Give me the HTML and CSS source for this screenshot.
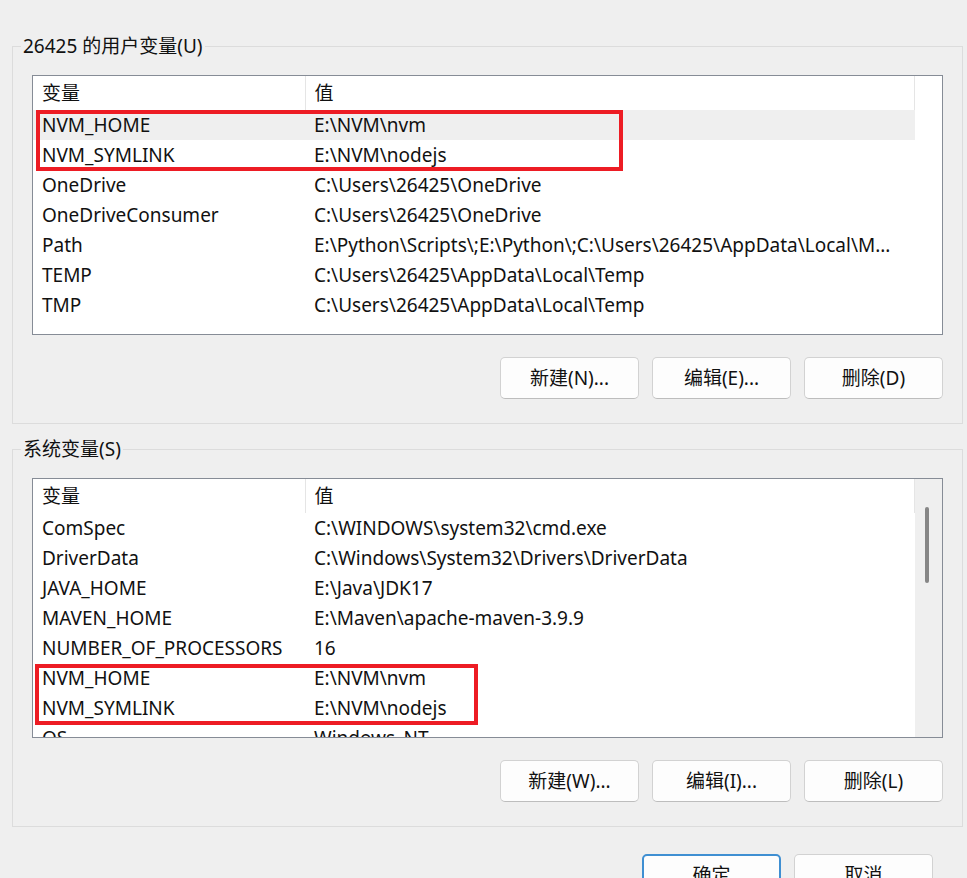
FILE: index.html
```html
<!DOCTYPE html>
<html lang="zh-CN">
  <head>
    <meta charset="UTF-8" />
    <meta name="viewport" content="width=device-width, initial-scale=1.0" />
    <title>环境变量</title>
    <link rel="stylesheet" href="styles.css">
  </head>
  <body>
    <form class="dialog">
      <fieldset class="group">
        <legend>26425 的用户变量(U)</legend>
        <div class="list">
          <table>
            <thead>
              <tr>
                <th class="name">变量</th>
                <th>值</th>
              </tr>
            </thead>
            <tbody>
              <tr class="selected"><td>NVM_HOME</td><td>E:\NVM\nvm</td></tr>
              <tr><td>NVM_SYMLINK</td><td>E:\NVM\nodejs</td></tr>
              <tr><td>OneDrive</td><td>C:\Users\26425\OneDrive</td></tr>
              <tr><td>OneDriveConsumer</td><td>C:\Users\26425\OneDrive</td></tr>
              <tr><td>Path</td><td>E:\Python\Scripts\;E:\Python\;C:\Users\26425\AppData\Local\M...</td></tr>
              <tr><td>TEMP</td><td>C:\Users\26425\AppData\Local\Temp</td></tr>
              <tr><td>TMP</td><td>C:\Users\26425\AppData\Local\Temp</td></tr>
            </tbody>
          </table>
          <div class="gutter"></div>
          <div class="mark mark-user"></div>
        </div>
        <div class="buttons">
          <button type="button">新建(N)...</button>
          <button type="button">编辑(E)...</button>
          <button type="button">删除(D)</button>
        </div>
      </fieldset>

      <fieldset class="group">
        <legend>系统变量(S)</legend>
        <div class="list">
          <table>
            <thead>
              <tr>
                <th class="name">变量</th>
                <th>值</th>
              </tr>
            </thead>
            <tbody>
              <tr><td>ComSpec</td><td>C:\WINDOWS\system32\cmd.exe</td></tr>
              <tr><td>DriverData</td><td>C:\Windows\System32\Drivers\DriverData</td></tr>
              <tr><td>JAVA_HOME</td><td>E:\Java\JDK17</td></tr>
              <tr><td>MAVEN_HOME</td><td>E:\Maven\apache-maven-3.9.9</td></tr>
              <tr><td>NUMBER_OF_PROCESSORS</td><td>16</td></tr>
              <tr><td>NVM_HOME</td><td>E:\NVM\nvm</td></tr>
              <tr><td>NVM_SYMLINK</td><td>E:\NVM\nodejs</td></tr>
              <tr><td>OS</td><td>Windows_NT</td></tr>
            </tbody>
          </table>
          <div class="gutter track"><div class="thumb"></div></div>
          <div class="mark mark-system"></div>
        </div>
        <div class="buttons">
          <button type="button">新建(W)...</button>
          <button type="button">编辑(I)...</button>
          <button type="button">删除(L)</button>
        </div>
      </fieldset>

      <div class="buttons footer">
        <button type="submit" class="primary">确定</button>
        <button type="button">取消</button>
      </div>
    </form>
  </body>
</html>
```

FILE: styles.css
```css
* {
  box-sizing: border-box;
}

body {
  margin: 0;
  overflow: hidden;
  background-color: #efefef;
  color: #111;
  font-family: "Noto Sans", "Noto Sans CJK SC", sans-serif;
  font-size: 19px;
}

.dialog {
  display: flex;
  flex-direction: column;
  gap: 12px;
  padding: 33px 4px 0 12px;
}

.group {
  min-width: 0;
  margin: 0;
  padding: 16px 19px 24px 19px;
  border: 1px solid #dcdcdc;
}

legend {
  margin-left: -11px;
  padding: 0 2px;
  line-height: 26px;
}

.list {
  position: relative;
  display: flex;
  align-items: flex-start;
  height: 260px;
  overflow: hidden;
  border: 1px solid #868c96;
  background-color: #fff;
}

table {
  flex: 1;
  min-width: 0;
  table-layout: fixed;
  border-collapse: collapse;
}

th,
td {
  overflow: hidden;
  height: 30px;
  padding: 0 0 0 9px;
  line-height: 30px;
  text-align: left;
  white-space: nowrap;
}

th {
  height: 34px;
  border-right: 1px solid #e5e5e5;
  font-weight: normal;
}

.name {
  width: 272px;
}

.selected {
  background-color: #efefef;
}

.gutter {
  width: 27px;
  height: 100%;
}

.track {
  background-color: #efefef;
}

.thumb {
  width: 4px;
  height: 76px;
  margin: 28px auto 0 10px;
  border-radius: 2px;
  background-color: #868686;
}

/* red frame round the NVM rows */
.mark {
  position: absolute;
  height: 61px;
  border: 4px solid #ed1c24;
}

.mark-user {
  top: 34px;
  left: 3px;
  width: 587px;
}

.mark-system {
  top: 185px;
  left: 2px;
  width: 443px;
}

.buttons {
  display: flex;
  justify-content: flex-end;
  gap: 13px;
  margin-top: 22px;
}

button {
  width: 139px;
  height: 42px;
  padding: 0 0 2px;
  border: 1px solid #d2d2d2;
  border-bottom-color: #bdbdbd;
  border-radius: 5px;
  background-color: #fdfdfd;
  color: #111;
  font-family: inherit;
  font-size: 19px;
}

.buttons .primary {
  border: 2px solid #3f8fd2;
}

.footer {
  margin-top: 15px;
  padding-right: 30px;
}
```
